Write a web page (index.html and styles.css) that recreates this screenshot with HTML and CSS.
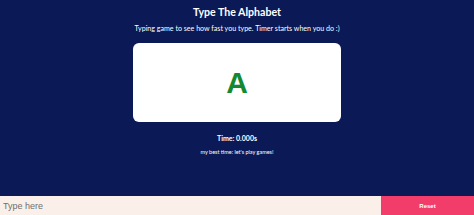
FILE: index.html
```html
<!DOCTYPE html>
<html lang="en">
<head>
    <meta charset="UTF-8">
    <meta name="viewport" content="width=device-width, initial-scale=1.0">
    <title>Type The Alphabet</title>
    <link rel="stylesheet" href="styles.css">
</head>
<body>
    <div class="page">
        <div class="container">
            <h1>Type The Alphabet</h1>
            <p class="subtitle">Typing game to see how fast you type. Timer starts when you do :)</p>
            <div class="card">
                <span class="letter">A</span>
            </div>
            <p class="timer">Time: 0.000s</p>
            <p class="best">my best time: let's play games!</p>
        </div>
        <div class="controls">
            <input type="text" class="type-input" placeholder="Type here">
            <button class="reset">Reset</button>
        </div>
    </div>
</body>
</html>
```

FILE: styles.css
```css
body {
    margin: 0;
    background-color: #0b1956;
    font-family: Lato, "Open Sans", sans-serif;
    color: #fff;
}
.page {
    display: flex;
    flex-direction: column;
    height: 100vh;
}
.container {
    flex: 1;
    display: flex;
    flex-direction: column;
    align-items: center;
}
h1 {
    margin: 4px 0 0;
    font-size: 10.6px;
    line-height: 16px;
    font-weight: bold;
}
.subtitle {
    margin: 4px 0 0;
    font-size: 7.1px;
    line-height: 10px;
}
.card {
    margin-top: 9px;
    width: 208px;
    height: 79px;
    background-color: #fff;
    border-radius: 6px;
    display: flex;
    align-items: center;
    justify-content: center;
}
.letter {
    font-family: "Liberation Sans", Arial, sans-serif;
    font-weight: bold;
    font-size: 30px;
    color: #14892f;
}
.timer {
    margin: 10px 0 0;
    font-size: 7px;
    line-height: 12px;
    font-weight: bold;
}
.best {
    margin: 4px 0 0;
    font-size: 5.5px;
    line-height: 8px;
}
.controls {
    display: flex;
    height: 19px;
}
.type-input {
    flex: 1;
    border: none;
    margin: 0;
    padding: 0 3px;
    background-color: #faf0e9;
    font-family: "Liberation Sans", Arial, sans-serif;
    font-size: 9px;
    outline: none;
}
.type-input::placeholder {
    color: #6f6f6f;
}
.reset {
    width: 93px;
    border: none;
    margin: 0;
    background-color: #f23d6b;
    color: #fff;
    font-family: "Liberation Sans", Arial, sans-serif;
    font-size: 6px;
    font-weight: bold;
    cursor: pointer;
}
```
